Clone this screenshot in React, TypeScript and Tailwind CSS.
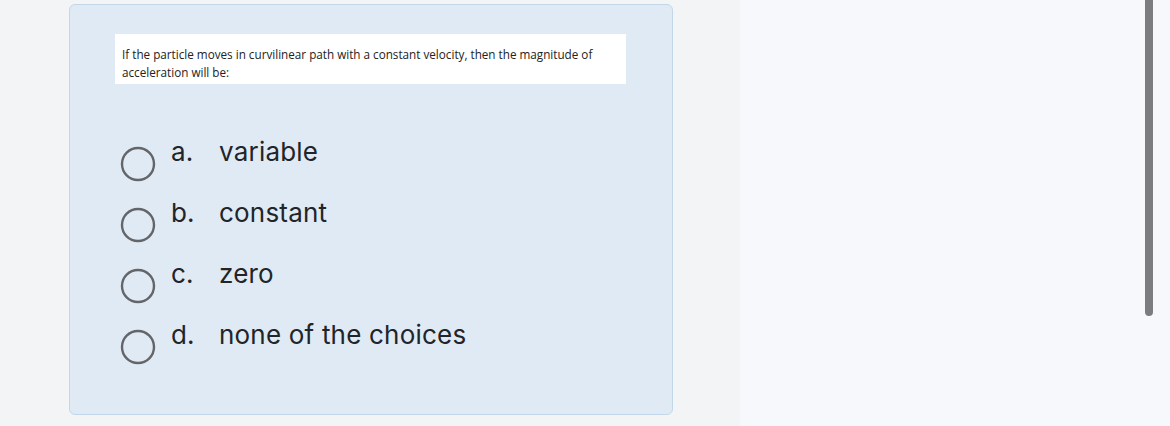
import React from 'react';

const choices = [
  { letter: 'a.', text: 'variable' },
  { letter: 'b.', text: 'constant' },
  { letter: 'c.', text: 'zero' },
  { letter: 'd.', text: 'none of the choices' },
];

function Radio() {
  return (
    <svg width="36" height="36" viewBox="0 0 36 36" className="shrink-0">
      <circle cx="18" cy="18" r="16" fill="none" stroke="#636569" strokeWidth="2.4" />
    </svg>
  );
}

export default function App() {
  return (
    <div className="flex h-[426px] w-[1170px] overflow-hidden">
      <div className="w-[740px] shrink-0 bg-[#f3f4f6] pl-[69px] pt-[4px]">
        <div className="h-[411px] w-[604px] rounded-[6px] border border-[#c3d7ea] bg-[#e0eaf4]">
          <div className="ml-[45px] mt-[29px] h-[50px] w-[511px] bg-white pl-[7px] pt-[11px] font-['Open_Sans',sans-serif] text-[11.7px] leading-[18px] text-[#222]">
            If the particle moves in curvilinear path with a constant velocity, then the magnitude of
            <br />
            acceleration will be:
          </div>
          <div className="mt-[53px] flex flex-col pl-[50px] font-['Inter',sans-serif] text-[26px] tracking-[0.2px] text-[#212529]">
            {choices.map((c) => (
              <div key={c.letter} className="flex h-[61px] items-start">
                <div className="mt-[9px]">
                  <Radio />
                </div>
                <span className="ml-[15px] w-[48px] leading-[30px]">{c.letter}</span>
                <span className="leading-[30px]">{c.text}</span>
              </div>
            ))}
          </div>
        </div>
      </div>
      <div className="flex flex-1 justify-end bg-[#f6f8fb] pr-[17px]">
        <div className="h-[316px] w-[8px] rounded-b-[4px] bg-[#7a7c80]" />
      </div>
    </div>
  );
}
